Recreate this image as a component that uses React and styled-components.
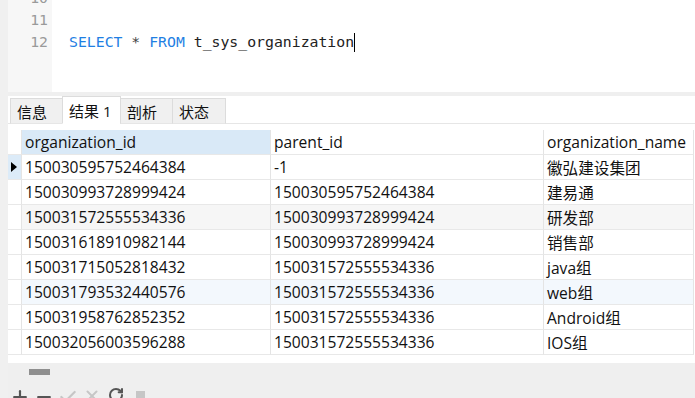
import React from 'react';
import styled, { createGlobalStyle } from 'styled-components';
import { Plus, Minus, Check, X, RotateCw } from 'lucide-react';

const GlobalStyle = createGlobalStyle`
  html, body {
    margin: 0;
    padding: 0;
    background: #f0f0f0;
    overflow: hidden;
  }
  body {
    width: 695px;
    height: 398px;
    font-family: "Open Sans", "Noto Sans CJK SC", sans-serif;
  }
  * { box-sizing: border-box; }
`;

const rows = [
  ['150030595752464384', '-1', '徽弘建设集团'],
  ['150030993728999424', '150030595752464384', '建易通'],
  ['150031572555534336', '150030993728999424', '研发部'],
  ['150031618910982144', '150030993728999424', '销售部'],
  ['150031715052818432', '150031572555534336', 'java组'],
  ['150031793532440576', '150031572555534336', 'web组'],
  ['150031958762852352', '150031572555534336', 'Android组'],
  ['150032056003596288', '150031572555534336', 'IOS组'],
];

const rowTone = { 2: '#f6f6f6', 5: '#f3f8fd' };

const tabs = [
  { label: '信息', w: 53 },
  { label: '结果 1', w: 59, active: true },
  { label: '剖析', w: 53 },
  { label: '状态', w: 54 },
];

const App = () => {
  return (
    <>
      <GlobalStyle />
      <Window>
        <SideStrip />
        <Main>
          <Editor>
            <Gutter>
              <Lines>
                <LineNo>10</LineNo>
                <LineNo>11</LineNo>
                <LineNo>12</LineNo>
              </Lines>
            </Gutter>
            <Code>
              <Lines>
                <CodeLine />
                <CodeLine />
                <CodeLine>
                  <Kw>SELECT</Kw>
                  <Op> * </Op>
                  <Kw>FROM</Kw>
                  <Ident> t_sys_organization</Ident>
                  <Caret />
                </CodeLine>
              </Lines>
            </Code>
          </Editor>
          <Divider />
          <TabBar>
            {tabs.map((t) => (
              <Tab key={t.label} $active={t.active} $w={t.w}>{t.label}</Tab>
            ))}
          </TabBar>
          <ResultPane>
            <Grid>
              <Cell $header />
              <Cell $header $selected>organization_id</Cell>
              <Cell $header>parent_id</Cell>
              <Cell $header>organization_name</Cell>
              {rows.map((r, i) => (
                <React.Fragment key={r[0]}>
                  <Indicator $current={i === 0}>{i === 0 && <Arrow />}</Indicator>
                  {r.map((v, j) => (
                    <Cell key={j} $bg={rowTone[i]}>{v}</Cell>
                  ))}
                </React.Fragment>
              ))}
            </Grid>
          </ResultPane>
          <BottomBar>
            <Handle />
            <Toolbar>
              <ToolIcon><Plus size={20} strokeWidth={2.6} /></ToolIcon>
              <ToolIcon><Minus size={20} strokeWidth={2.6} /></ToolIcon>
              <ToolIcon $dim><Check size={20} strokeWidth={2.6} /></ToolIcon>
              <ToolIcon $dim><X size={18} strokeWidth={2.6} /></ToolIcon>
              <ToolIcon><RotateCw size={16} strokeWidth={3} /></ToolIcon>
              <ToolIcon $dim><StopBox /></ToolIcon>
            </Toolbar>
          </BottomBar>
        </Main>
      </Window>
    </>
  );
};

const Window = styled.div`
  display: flex;
  width: 695px;
  height: 398px;
  overflow: hidden;
`;

const SideStrip = styled.div`
  width: 8px;
  flex-shrink: 0;
  background: #f0f0f0;
`;

const Main = styled.div`
  flex: 1;
  display: flex;
  flex-direction: column;
  min-width: 0;
  & > * { flex-shrink: 0; }
`;

const Editor = styled.div`
  height: 92px;
  display: flex;
  background: #fff;
  overflow: hidden;
  font-family: "DejaVu Sans Mono", "Liberation Mono", monospace;
  font-size: 14.8px;
`;

const Gutter = styled.div`
  width: 44px;
  background: #f7f7f7;
  text-align: right;
  padding-right: 4px;
  color: #9a9a9a;
`;

const Lines = styled.div`
  margin-top: -13px;
`;

const LineNo = styled.div`
  height: 22px;
  line-height: 22px;
`;

const Code = styled.div`
  flex: 1;
  padding-left: 17px;
`;

const CodeLine = styled.div`
  height: 22px;
  line-height: 22px;
  white-space: pre;
  display: flex;
  align-items: center;
`;

const Kw = styled.span`
  color: #1f7fe3;
`;

const Op = styled.span`
  color: #444;
`;

const Ident = styled.span`
  color: #222;
`;

const Caret = styled.span`
  display: inline-block;
  width: 1px;
  height: 19px;
  background: #000;
`;

const Divider = styled.div`
  height: 4px;
  background: #efefef;
`;

const TabBar = styled.div`
  height: 28px;
  display: flex;
  align-items: flex-end;
  padding-left: 2px;
  background: #fff;
  border-bottom: 1px solid #e6e6e6;
`;

const Tab = styled.div`
  width: ${(p) => p.$w}px;
  height: ${(p) => (p.$active ? '28px' : '26px')};
  margin-bottom: -1px;
  padding-left: 6px;
  display: flex;
  align-items: center;
  font-size: 15px;
  color: #111;
  background: ${(p) => (p.$active ? '#fff' : '#f0f0f0')};
  border: 1px solid #dcdcdc;
  border-bottom: ${(p) => (p.$active ? '1px solid #fff' : '1px solid #e6e6e6')};
  & + & { margin-left: -1px; }
`;

const ResultPane = styled.div`
  background: #fff;
  padding: 6px 0 8px;
`;

const Grid = styled.div`
  display: grid;
  grid-template-columns: 14px 249px 273px 150px;
  grid-auto-rows: 25px;
  font-size: 15.6px;
  color: #111;
`;

const Cell = styled.div`
  display: flex;
  align-items: center;
  padding-left: 3px;
  white-space: nowrap;
  overflow: hidden;
  border-right: 1px solid #e4e4e4;
  border-bottom: 1px solid #e8e8e8;
  background: ${(p) => (p.$selected ? '#d9e9f7' : p.$bg || '#fff')};
`;

const Indicator = styled.div`
  display: flex;
  align-items: center;
  justify-content: center;
  border-right: 1px solid #e4e4e4;
  border-bottom: 1px solid #e8e8e8;
  background: ${(p) => (p.$current ? '#dcebf8' : '#fff')};
`;

const Arrow = styled.span`
  width: 0;
  height: 0;
  border-top: 5px solid transparent;
  border-bottom: 5px solid transparent;
  border-left: 6px solid #000;
  margin-left: -2px;
`;

const BottomBar = styled.div`
  flex: 1 1 auto;
  min-height: 0;
  overflow: hidden;
  background: #efefef;
  padding-top: 6px;
`;

const Handle = styled.div`
  width: 21px;
  height: 6px;
  margin-left: 21px;
  background: #8f8f8f;
`;

const Toolbar = styled.div`
  display: flex;
  align-items: flex-start;
  margin-top: 12px;
`;

const ToolIcon = styled.span`
  display: flex;
  width: 24px;
  height: 20px;
  justify-content: center;
  align-items: flex-start;
  padding-top: ${(p) => (p.$dim ? '0' : '0')};
  color: ${(p) => (p.$dim ? '#c6c6c6' : '#555')};
  & > svg { margin-top: 0; }
`;

const StopBox = styled.span`
  width: 9px;
  height: 12px;
  margin-top: 4px;
  background: #c6c6c6;
`;

export default App;
